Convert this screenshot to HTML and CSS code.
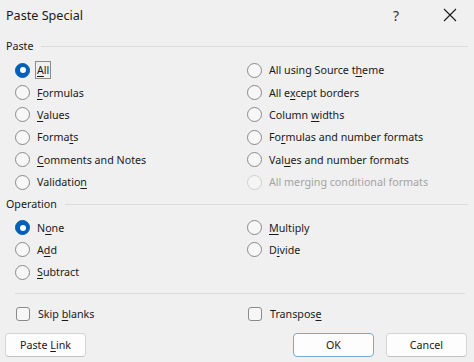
FILE: index.html
```html
<!DOCTYPE html>
<html lang="en">
    <head>
        <meta charset="UTF-8">
        <title>Paste Special</title>
        <link rel="stylesheet" href="styles.css">
    </head>
    <body>
        <div class="dialog">
            <header class="title-bar">
                <h1>Paste Special</h1>
                <span class="help">?</span>
                <svg class="close" width="14" height="14" viewBox="0 0 14 14">
                    <path d="M1 1 L13 13 M13 1 L1 13" stroke="#1a1a1a" stroke-width="1.1" fill="none"/>
                </svg>
            </header>

            <div class="group-head">
                <span>Paste</span>
                <div class="rule"></div>
            </div>
            <div class="options paste">
                <label class="opt"><span class="radio checked"></span><span class="focus"><u>A</u>ll</span></label>
                <label class="opt"><span class="radio"></span><span>All using Source t<u>h</u>eme</span></label>
                <label class="opt"><span class="radio"></span><span><u>F</u>ormulas</span></label>
                <label class="opt"><span class="radio"></span><span>All e<u>x</u>cept borders</span></label>
                <label class="opt"><span class="radio"></span><span><u>V</u>alues</span></label>
                <label class="opt"><span class="radio"></span><span>Column <u>w</u>idths</span></label>
                <label class="opt"><span class="radio"></span><span>Forma<u>t</u>s</span></label>
                <label class="opt"><span class="radio"></span><span>Fo<u>r</u>mulas and number formats</span></label>
                <label class="opt"><span class="radio"></span><span><u>C</u>omments and Notes</span></label>
                <label class="opt"><span class="radio"></span><span>Val<u>u</u>es and number formats</span></label>
                <label class="opt"><span class="radio"></span><span>Validatio<u>n</u></span></label>
                <label class="opt disabled"><span class="radio"></span><span>All merging conditional formats</span></label>
            </div>

            <div class="group-head operation">
                <span>Operation</span>
                <div class="rule"></div>
            </div>
            <div class="options">
                <label class="opt"><span class="radio checked"></span><span>N<u>o</u>ne</span></label>
                <label class="opt"><span class="radio"></span><span><u>M</u>ultiply</span></label>
                <label class="opt"><span class="radio"></span><span>A<u>d</u>d</span></label>
                <label class="opt"><span class="radio"></span><span>D<u>i</u>vide</span></label>
                <label class="opt"><span class="radio"></span><span><u>S</u>ubtract</span></label>
            </div>

            <div class="separator"></div>

            <div class="options checks">
                <label class="opt"><span class="box"></span><span>Skip <u>b</u>lanks</span></label>
                <label class="opt"><span class="box"></span><span>Transpos<u>e</u></span></label>
            </div>

            <footer class="buttons">
                <button class="btn">Paste <u>L</u>ink</button>
                <div class="spacer"></div>
                <button class="btn primary">OK</button>
                <button class="btn">Cancel</button>
            </footer>
        </div>
    </body>
</html>
```

FILE: styles.css
```css
body{
    margin: 0;
    padding: 0;
    background-color: #F0F0F0;
    color: #1A1A1A;
    font-family: "Noto Sans", "Open Sans", sans-serif;
    font-size: 10.7px;
}
.dialog{
    width: 474px;
    height: 362px;
    box-sizing: border-box;
}
.title-bar{
    display: flex;
    align-items: center;
    height: 30px;
    padding: 0 0 0 6px;
}
.title-bar h1{
    font-size: 12.6px;
    font-weight: normal;
    margin: 0;
    flex: 1;
}
.help{
    font-size: 14px;
    color: #333;
    margin-right: 44px;
}
.close{
    margin-right: 17px;
}
.group-head{
    display: flex;
    align-items: center;
    height: 16px;
    padding: 0 6px;
    margin-top: 8px;
}
.group-head.operation{
    margin-top: 3px;
}
.group-head span{
    margin-right: 8px;
}
.rule{
    flex: 1;
    border-top: 1px solid #DCDCDC;
    margin-top: 1px;
}
.options{
    display: grid;
    grid-template-columns: 232px 1fr;
    grid-auto-rows: 22.4px;
    padding-left: 15px;
    margin-top: 4px;
}
.options.paste{
    margin-top: 5px;
}
.opt{
    display: flex;
    align-items: center;
}
.radio{
    width: 13px;
    height: 13px;
    border: 1px solid #8A8A8A;
    border-radius: 50%;
    background-color: #F7F7F7;
    margin-right: 7px;
    box-sizing: content-box;
    display: flex;
    align-items: center;
    justify-content: center;
}
.radio.checked{
    background-color: #005FB8;
    border-color: #005FB8;
}
.radio.checked::after{
    content: "";
    width: 6px;
    height: 6px;
    border-radius: 50%;
    background-color: #FFF;
}
.disabled{
    color: #A3A3A3;
}
.disabled .radio{
    border-color: #CFCFCF;
    background-color: #F5F5F5;
}
.focus{
    outline: 1px solid #8A8A8A;
    padding: 1px;
    margin-left: -1px;
}
u{
    text-decoration-thickness: 1px;
    text-underline-offset: 2px;
}
.separator{
    border-top: 1px solid #DCDCDC;
    margin: 9px 9px 0 15px;
}
.checks{
    margin-top: 9px;
}
.box{
    width: 12px;
    height: 12px;
    border: 1px solid #8A8A8A;
    border-radius: 3px;
    background-color: #F7F7F7;
    margin-right: 8px;
    margin-left: 1px;
}
.buttons{
    display: flex;
    padding: 0 7px 0 5px;
    margin-top: 8px;
    gap: 12px;
}
.spacer{
    flex: 1;
}
.btn{
    width: 81px;
    height: 24px;
    font-family: "Noto Sans", "Open Sans", sans-serif;
    font-size: 10.7px;
    color: #1A1A1A;
    background-color: #FDFDFD;
    border: 1px solid #D5D5D5;
    border-bottom-color: #C2C2C2;
    border-radius: 4px;
    padding: 0;
}
.btn.primary{
    border-color: #7AA6D8;
}
```
